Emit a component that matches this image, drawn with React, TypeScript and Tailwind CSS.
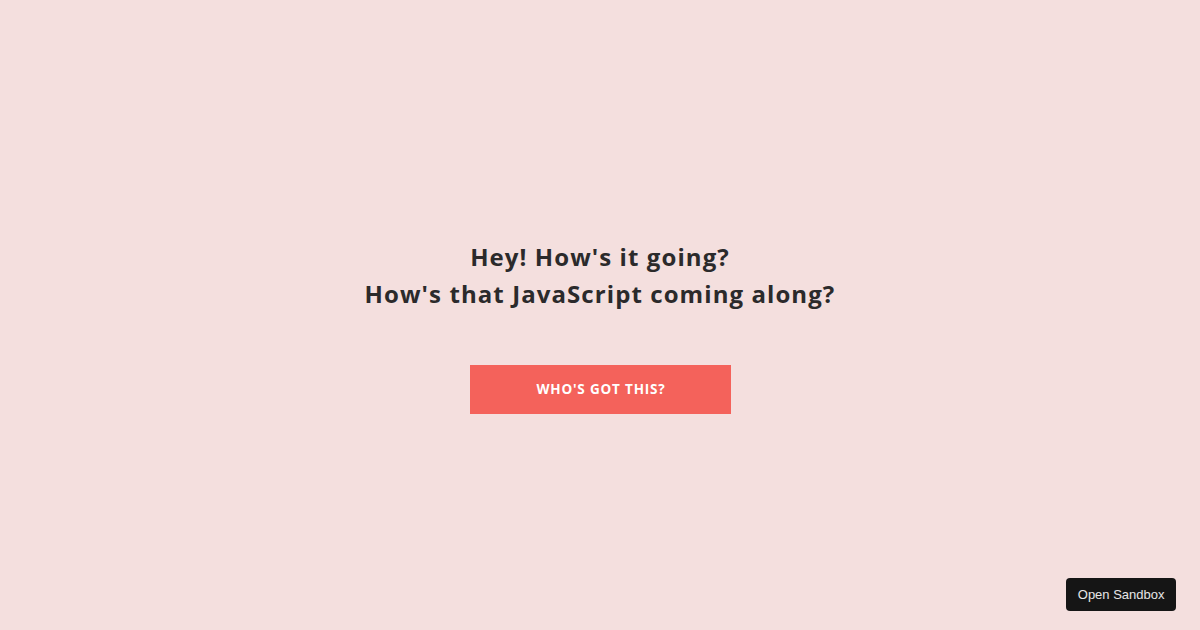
export default function App() {
  return (
    <div className="relative flex h-[630px] w-full flex-col items-center justify-center bg-[#f4dfde] font-['Open_Sans',sans-serif]">
      <div className="mt-[22px] flex flex-col items-center">
        <h1 className="text-center text-[24px] font-bold leading-[37px] tracking-[0.045em] text-[#2b2a2b]">
          Hey! How's it going?
          <br />
          How's that JavaScript coming along?
        </h1>
        <button className="ml-[2px] mt-[53px] h-[49px] w-[261px] bg-[#f4625b] text-[13.5px] font-bold uppercase tracking-[0.06em] text-white">
          Who's got this?
        </button>
      </div>
      <button className="absolute bottom-[19px] right-[24px] h-[33px] rounded-[4px] bg-[#151515] px-[11.5px] font-['Liberation_Sans',sans-serif] text-[13px] text-white/90">
        Open Sandbox
      </button>
    </div>
  );
}
